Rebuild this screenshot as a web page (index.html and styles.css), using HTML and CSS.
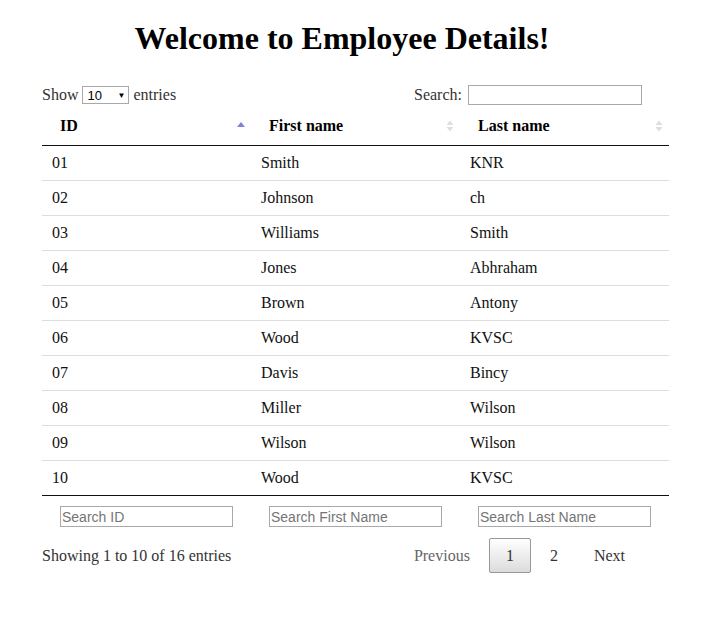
FILE: index.html
```html
<!DOCTYPE html>
<html>
<head>
<meta charset="utf-8">
<title>Employee Details</title>
<link rel="stylesheet" href="styles.css">
</head>
<body>
<div class="container">
  <h1 class="title">Welcome to Employee Details!</h1>
  <div class="dt-wrapper">
    <div class="dt-top">
      <label class="dt-length">Show <span class="select-box">10 <span class="caret">&#9660;</span></span> entries</label>
      <label class="dt-filter">Search: <input type="text" class="search-input"></label>
    </div>
    <table class="dt-table">
      <thead>
        <tr>
          <th><div class="th-inner"><span>ID</span>
            <svg class="sort" width="10" height="12" viewBox="0 0 10 12"><polygon points="1,7 5,2 9,7" fill="#8181d6"/></svg></div></th>
          <th><div class="th-inner"><span>First name</span>
            <svg class="sort" width="10" height="14" viewBox="0 0 10 14"><polygon points="1.5,6 5,1.5 8.5,6" fill="#dedede"/><polygon points="1.5,8 5,12.5 8.5,8" fill="#dedede"/></svg></div></th>
          <th><div class="th-inner"><span>Last name</span>
            <svg class="sort" width="10" height="14" viewBox="0 0 10 14"><polygon points="1.5,6 5,1.5 8.5,6" fill="#dedede"/><polygon points="1.5,8 5,12.5 8.5,8" fill="#dedede"/></svg></div></th>
        </tr>
      </thead>
      <tbody>
        <tr><td>01</td><td>Smith</td><td>KNR</td></tr>
        <tr><td>02</td><td>Johnson</td><td>ch</td></tr>
        <tr><td>03</td><td>Williams</td><td>Smith</td></tr>
        <tr><td>04</td><td>Jones</td><td>Abhraham</td></tr>
        <tr><td>05</td><td>Brown</td><td>Antony</td></tr>
        <tr><td>06</td><td>Wood</td><td>KVSC</td></tr>
        <tr><td>07</td><td>Davis</td><td>Bincy</td></tr>
        <tr><td>08</td><td>Miller</td><td>Wilson</td></tr>
        <tr><td>09</td><td>Wilson</td><td>Wilson</td></tr>
        <tr><td>10</td><td>Wood</td><td>KVSC</td></tr>
      </tbody>
      <tfoot>
        <tr>
          <th><input type="text" class="col-search" placeholder="Search ID"></th>
          <th><input type="text" class="col-search" placeholder="Search First Name"></th>
          <th><input type="text" class="col-search" placeholder="Search Last Name"></th>
        </tr>
      </tfoot>
    </table>
    <div class="dt-bottom">
      <div class="dt-info">Showing 1 to 10 of 16 entries</div>
      <div class="dt-paginate">
        <span class="pg-btn disabled">Previous</span>
        <span class="pg-btn current">1</span>
        <span class="pg-btn">2</span>
        <span class="pg-btn">Next</span>
      </div>
    </div>
  </div>
</div>
</body>
</html>
```

FILE: styles.css
```css
html, body {
  margin: 0;
  padding: 0;
  background: #ffffff;
}
body {
  font-family: "Liberation Serif", "Times New Roman", serif;
  font-size: 16px;
  color: #111111;
}
.container {
  width: 600px;
  margin-left: 42px;
  padding-top: 20px;
}
.title {
  font-size: 32px;
  font-weight: bold;
  text-align: center;
  margin: 0 0 26px 0;
  color: #000;
  line-height: 37px;
}
.dt-top {
  display: flex;
  justify-content: space-between;
  align-items: center;
  height: 24px;
}
.dt-length {
  font-size: 16px;
  color: #333;
  display: flex;
  align-items: center;
  gap: 4px;
}
.select-box {
  display: inline-flex;
  align-items: center;
  justify-content: space-between;
  width: 38px;
  height: 16px;
  padding: 0 3px 0 4px;
  border: 1px solid #a9a9a9;
  font-family: "Liberation Sans", Arial, sans-serif;
  font-size: 13px;
  color: #000;
  background: #fff;
}
.caret {
  font-size: 8px;
}
.dt-filter {
  font-size: 16px;
  color: #333;
  display: flex;
  align-items: center;
  gap: 6px;
}
.search-input {
  width: 170px;
  height: 16px;
  margin: 0;
  padding: 1px 1px;
  border: 1px solid #a9a9a9;
  font-size: 13px;
}
.dt-table {
  width: 627px;
  border-collapse: separate;
  border-spacing: 0;
  table-layout: fixed;
}
.dt-table thead th {
  text-align: left;
  font-weight: bold;
  padding: 10px 4px 10px 18px;
  border-bottom: 1px solid #111;
  line-height: 18px;
  font-size: 16px;
  color: #000;
}
.th-inner {
  display: flex;
  justify-content: space-between;
  align-items: center;
}
.sort {
  display: block;
  margin-right: 1px;
}
.dt-table tbody td {
  padding: 8px 10px 8px 10px;
  line-height: 18px;
  font-size: 16px;
  color: #111;
  border-top: 1px solid #dddddd;
}
.dt-table tbody tr:first-child td {
  border-top: none;
}
.dt-table tfoot th {
  text-align: left;
  padding: 10px 18px 6px 18px;
  border-top: 1px solid #111;
  font-weight: normal;
}
.col-search {
  width: 169px;
  height: 17px;
  margin: 0;
  padding: 1px 1px;
  border: 1px solid #a9a9a9;
  font-family: "Liberation Sans", Arial, sans-serif;
  font-size: 14px;
  color: #333;
}
.col-search::placeholder {
  color: #757575;
}
.dt-bottom {
  width: 627px;
  display: flex;
  justify-content: space-between;
  align-items: center;
  padding-top: 5px;
}
.dt-info {
  font-size: 16px;
  color: #333;
}
.dt-paginate {
  display: flex;
  align-items: center;
  margin-right: 27px;
}
.pg-btn {
  box-sizing: border-box;
  min-width: 42px;
  padding: 8px 16px;
  margin-left: 2px;
  font-size: 16px;
  line-height: 17px;
  color: #333;
  text-align: center;
  border: 1px solid transparent;
  border-radius: 2px;
}
.pg-btn.disabled {
  color: #666;
}
.pg-btn.current {
  border-color: #979797;
  background: linear-gradient(to bottom, #ffffff 0%, #dcdcdc 100%);
}
```
